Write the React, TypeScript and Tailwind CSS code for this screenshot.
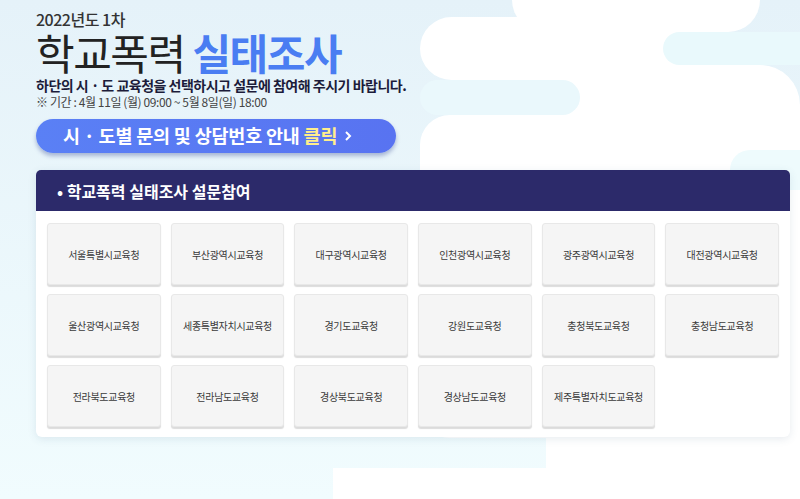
const offices = [
  '서울특별시교육청',
  '부산광역시교육청',
  '대구광역시교육청',
  '인천광역시교육청',
  '광주광역시교육청',
  '대전광역시교육청',
  '울산광역시교육청',
  '세종특별자치시교육청',
  '경기도교육청',
  '강원도교육청',
  '충청북도교육청',
  '충청남도교육청',
  '전라북도교육청',
  '전라남도교육청',
  '경상북도교육청',
  '경상남도교육청',
  '제주특별자치도교육청',
];

const font = "font-['Noto_Sans_CJK_KR','Noto_Sans',sans-serif]";

// white cloud drawing behind the page
function Clouds() {
  return (
    <svg className="pointer-events-none absolute inset-0" width="800" height="499" viewBox="0 0 800 499">
      <rect x="512" y="-40" width="248" height="72" rx="32" fill="#fff" />
      <rect x="420" y="17" width="300" height="63" rx="31.5" fill="#fff" />
      <rect x="546" y="65" width="254" height="500" rx="40" fill="#fff" />
      <rect x="663" y="32" width="200" height="33" rx="16.5" fill="#e9f9fc" />
      <rect x="420" y="80" width="160" height="35" rx="17.5" fill="#eaf8fc" />
      <rect x="420" y="115" width="400" height="323" rx="30" fill="#fff" />
      <rect x="730" y="150" width="120" height="40" rx="20" fill="#eefbfd" />
      <rect x="333" y="468" width="480" height="60" fill="#fff" />
    </svg>
  );
}

export default function App() {
  return (
    <div className={`relative h-[499px] w-full overflow-hidden bg-gradient-to-b from-[#e5f2f9] to-[#f1fcfe] ${font}`}>
      <Clouds />
      <div className="relative flex flex-col pl-[36px] pt-[10px]">
        <p className="text-[16px] leading-[18px] font-medium tracking-[-0.5px] text-[#333]">2022년도 1차</p>
        <h1 className="mt-px text-[42px] leading-[46px] font-normal tracking-[-1.5px] text-[#222]">
          학교폭력 <span className="font-bold text-[#4a7df2]">실태조사</span>
        </h1>
        <p className="mt-px text-[14px] leading-[18px] font-bold tracking-[-0.5px] text-[#1c1c3a]">
          하단의 시 · 도 교육청을 선택하시고 설문에 참여해 주시기 바랍니다.
        </p>
        <p className="-mt-px text-[12px] leading-[17px] tracking-[-0.4px] text-[#444]">
          ※ 기간 : 4월 11일 (월) 09:00 ~ 5월 8일(일) 18:00
        </p>
        <button className="mt-[9px] flex h-[34px] w-[360px] items-center rounded-full bg-gradient-to-r from-[#5a80f5] to-[#5873f1] pl-[27px] text-[18.5px] font-bold tracking-[-0.2px] text-white shadow-[0_3px_4px_rgba(40,60,140,0.35)]">
          시 · 도별 문의 및 상담번호 안내&nbsp;<span className="text-[#ffee8c]">클릭</span>
          <svg width="8" height="12" viewBox="0 0 8 12" className="ml-[7px]">
            <path d="M2 2l4 4-4 4" fill="none" stroke="white" strokeWidth="2" />
          </svg>
        </button>

        <section className="mt-[17px] w-[754px] rounded-[6px] bg-white shadow-[0_2px_8px_rgba(60,90,120,0.12)]">
          <div className="flex h-[41px] items-center rounded-t-[5px] bg-[#2c2a6a] pl-[21px] text-[16px] font-bold text-white">
            • 학교폭력 실태조사 설문참여
          </div>
          <div className="grid grid-cols-6 gap-x-[10px] gap-y-[9px] px-[11px] pt-[12px] pb-[10px]">
            {offices.map((name) => (
              <button
                key={name}
                className="flex h-[62px] items-center justify-center rounded-[3px] border border-[#e8e8e8] bg-[#f5f5f5] text-[10px] tracking-[-0.3px] text-[#3a3a3a] shadow-[0_2px_1px_rgba(0,0,0,0.14)]"
              >
                {name}
              </button>
            ))}
          </div>
        </section>
      </div>
    </div>
  );
}
